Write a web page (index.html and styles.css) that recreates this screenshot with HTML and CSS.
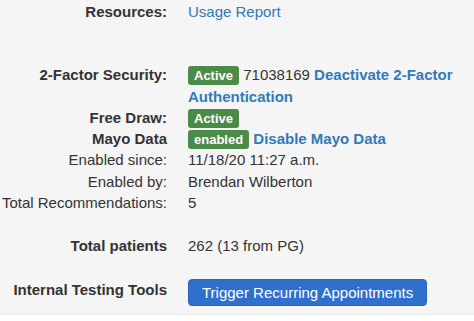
FILE: index.html
```html
<!DOCTYPE html>
<html>
<head>
    <title>Account Details</title>
    <link rel="stylesheet" href="styles.css">
</head>
<body>
    <div class="panel">
        <div class="info-grid">
            <div class="info-label strong">Resources:</div>
            <div class="info-value"><a href="#">Usage Report</a></div>
        </div>

        <div class="info-grid group">
            <div class="info-label strong">2-Factor Security:</div>
            <div class="info-value">
                <span class="badge">Active</span> 71038169 <a href="#" class="strong">Deactivate 2-Factor Authentication</a>
            </div>

            <div class="info-label strong">Free Draw:</div>
            <div class="info-value"><span class="badge">Active</span></div>

            <div class="info-label strong">Mayo Data</div>
            <div class="info-value">
                <span class="badge">enabled</span> <a href="#" class="strong">Disable Mayo Data</a>
            </div>

            <div class="info-label">Enabled since:</div>
            <div class="info-value">11/18/20 11:27 a.m.</div>

            <div class="info-label">Enabled by:</div>
            <div class="info-value">Brendan Wilberton</div>

            <div class="info-label">Total Recommendations:</div>
            <div class="info-value">5</div>
        </div>

        <div class="info-grid group-small">
            <div class="info-label strong">Total patients</div>
            <div class="info-value">262 (13 from PG)</div>
        </div>

        <div class="info-grid tools">
            <div class="info-label strong">Internal Testing Tools</div>
            <div class="info-value">
                <button class="btn-primary">Trigger Recurring Appointments</button>
            </div>
        </div>
    </div>
</body>
</html>
```

FILE: styles.css
```css
body {
    margin: 0;
    background: #fff;
    color: #333;
    font-family: 'Liberation Sans', Arial, sans-serif;
    font-size: 15px;
}
.panel {
    background: #f5f5f5;
    border-bottom: 1px solid #ebebeb;
    padding-top: 1px;
    height: 315px;
    box-sizing: border-box;
}
.info-grid {
    display: grid;
    grid-template-columns: 167px 1fr;
    column-gap: 21px;
    line-height: 21.3px;
}
.info-grid.group {
    margin-top: 42px;
}
.info-grid.group-small {
    margin-top: 22px;
}
.info-grid.tools {
    margin-top: 22px;
    align-items: start;
}
.info-label {
    text-align: right;
    white-space: nowrap;
}
.strong {
    font-weight: bold;
}
a {
    color: #337ab7;
    text-decoration: none;
}
.badge {
    display: inline-block;
    background: #4c8a47;
    color: #fff;
    font-weight: bold;
    font-size: 13px;
    line-height: 14px;
    padding: 3px 6px 2px;
    border-radius: 3px;
}
.btn-primary {
    background: #2f6fcd;
    color: #fff;
    border: 1px solid #2a63b8;
    border-radius: 4px;
    font-family: inherit;
    font-size: 15px;
    line-height: 19px;
    padding: 3px 13px;
    white-space: nowrap;
    cursor: pointer;
}
```
